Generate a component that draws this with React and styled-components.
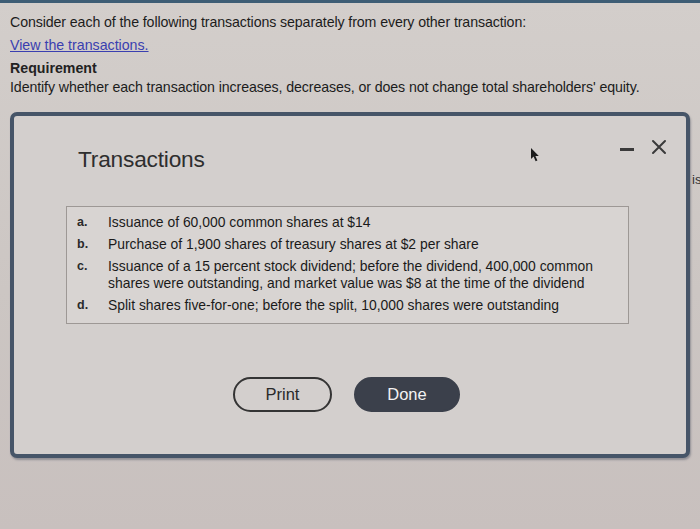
import styled, { createGlobalStyle } from "styled-components"

const GlobalStyle = createGlobalStyle`
  html, body {
    margin: 0;
    padding: 0;
    background: #ccc6c2;
  }
  body {
    font-family: "Liberation Sans", Arial, sans-serif;
    color: #262626;
  }
`

const transactions = [
    { label: "a.", text: "Issuance of 60,000 common shares at $14" },
    { label: "b.", text: "Purchase of 1,900 shares of treasury shares at $2 per share" },
    {
        label: "c.",
        text: "Issuance of a 15 percent stock dividend; before the dividend, 400,000 common shares were outstanding, and market value was $8 at the time of the dividend",
    },
    { label: "d.", text: "Split shares five-for-one; before the split, 10,000 shares were outstanding" },
]

export default function App() {
    return (
        <Page>
            <GlobalStyle />
            <TopStrip />
            <Question>
                <Line>Consider each of the following transactions separately from every other transaction:</Line>
                <Link href="#">View the transactions.</Link>
                <Heading>Requirement</Heading>
                <Line>Identify whether each transaction increases, decreases, or does not change total shareholders' equity.</Line>
            </Question>

            <Peek>is</Peek>

            <Modal>
                <ModalHeader>
                    <Title>Transactions</Title>
                    <Controls>
                        <Minimize aria-label="minimize" />
                        <Close aria-label="close">
                            <svg width="16" height="16" viewBox="0 0 16 16">
                                <path d="M2 2 L14 14 M14 2 L2 14" stroke="#3a3a3a" strokeWidth="2" strokeLinecap="round" />
                            </svg>
                        </Close>
                    </Controls>
                    <Cursor width="10" height="16" viewBox="0 0 10 16">
                        <path d="M1 1 L1 12 L3.6 9.6 L5.6 14.2 L7.4 13.4 L5.4 8.9 L8.8 8.9 Z" fill="#1c1c1c" />
                    </Cursor>
                </ModalHeader>

                <Table>
                    {transactions.map((t) => (
                        <Row key={t.label}>
                            <Label>{t.label}</Label>
                            <RowText>{t.text}</RowText>
                        </Row>
                    ))}
                </Table>

                <Buttons>
                    <Button>Print</Button>
                    <Button $primary>Done</Button>
                </Buttons>
            </Modal>
        </Page>
    )
}

const Page = styled.div`
    position: relative;
    width: 700px;
    height: 529px;
    overflow: hidden;
    background: linear-gradient(180deg, #d3cecb 0%, #ccc6c3 55%, #c8c0be 100%);
`

const TopStrip = styled.div`
    height: 3px;
    background: #3e5d75;
`

const Question = styled.div`
    display: flex;
    flex-direction: column;
    padding: 10px 10px 0;
    font-size: 14.2px;
`

const Line = styled.div`
    line-height: 19px;
    color: #1c1c1c;
    letter-spacing: -0.1px;
`

const Link = styled.a`
    align-self: flex-start;
    margin-top: 4px;
    line-height: 19px;
    color: #3a3fb0;
    text-decoration: underline;
`

const Heading = styled.div`
    margin-top: 4px;
    line-height: 19px;
    font-weight: bold;
    color: #222;
`

const Peek = styled.span`
    position: absolute;
    left: 692px;
    top: 172px;
    font-size: 13px;
    color: #333;
`

const Modal = styled.div`
    position: relative;
    margin: 15px 0 0 10px;
    width: 672px;
    height: 338px;
    border: 4px solid #465568;
    border-radius: 7px;
    background: #d3cfcd;
    box-shadow: 1px 2px 2px rgba(40, 50, 70, 0.35);
    display: flex;
    flex-direction: column;
`

const ModalHeader = styled.div`
    position: relative;
    display: flex;
    justify-content: space-between;
    align-items: flex-start;
    padding: 30px 19px 0 64px;
    height: 60px;
`

const Title = styled.h2`
    margin: 0;
    font-size: 22.7px;
    font-weight: normal;
    color: #2e2e2e;
    letter-spacing: -0.2px;
`

const Controls = styled.div`
    display: flex;
    align-items: center;
    gap: 17px;
    margin-top: -7px;
`

const Minimize = styled.span`
    display: block;
    width: 14px;
    height: 3px;
    background: #3a3a3a;
    margin-top: 4px;
`

const Close = styled.span`
    display: flex;
`

const Cursor = styled.svg`
    position: absolute;
    left: 516px;
    top: 31px;
`

const Table = styled.div`
    margin: 0 0 0 52px;
    width: 563px;
    height: 118px;
    box-sizing: border-box;
    border: 1px solid #9d9895;
    background: #d8d4d2;
    padding: 7px 0 0 10px;
    display: flex;
    flex-direction: column;
    gap: 5px;
`

const Row = styled.div`
    display: grid;
    grid-template-columns: 31px 1fr;
    font-size: 13.9px;
    line-height: 17px;
    color: #1a1a1a;
`

const Label = styled.span`
    color: #2a2a2a;
    font-weight: bold;
    font-size: 12.5px;
`

const RowText = styled.span`
    padding-right: 20px;
`

const Buttons = styled.div`
    display: flex;
    justify-content: center;
    gap: 22px;
    margin-top: 53px;
    padding-right: 7px;
`

const Button = styled.button`
    box-sizing: border-box;
    width: ${(p) => (p.$primary ? "106px" : "99px")};
    height: 35px;
    border-radius: 18px;
    border: 2px solid ${(p) => (p.$primary ? "#3b404b" : "#343434")};
    background: ${(p) => (p.$primary ? "#3b404b" : "transparent")};
    color: ${(p) => (p.$primary ? "#f2f2f2" : "#2a2a2a")};
    font-family: "Liberation Sans", Arial, sans-serif;
    font-size: 16.5px;
`
